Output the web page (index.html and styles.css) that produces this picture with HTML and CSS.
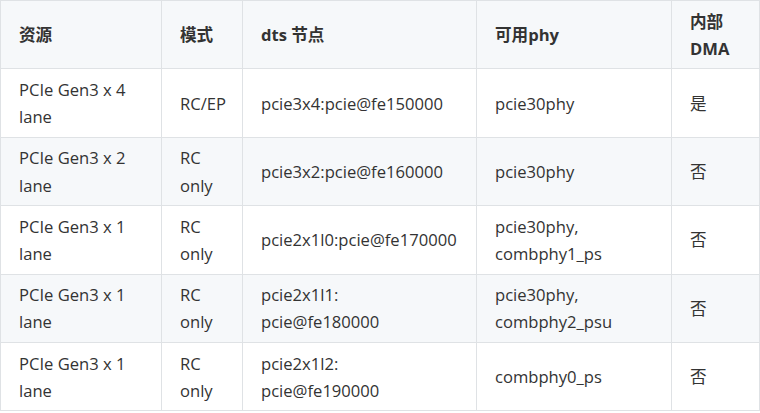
FILE: index.html
```html
<!DOCTYPE html>
<html lang="zh">
<head>
<meta charset="utf-8">
<link rel="stylesheet" href="styles.css">
</head>
<body>
<table class="tbl">
  <colgroup>
    <col class="c1"><col class="c2"><col class="c3"><col class="c4"><col class="c5">
  </colgroup>
  <thead>
    <tr><th>资源</th><th>模式</th><th>dts 节点</th><th>可用phy</th><th>内部DMA</th></tr>
  </thead>
  <tbody>
    <tr><td>PCIe Gen3 x 4 lane</td><td class="mode">RC/EP</td><td>pcie3x4:pcie@fe150000</td><td>pcie30phy</td><td>是</td></tr>
    <tr><td>PCIe Gen3 x 2 lane</td><td class="mode">RC only</td><td>pcie3x2:pcie@fe160000</td><td>pcie30phy</td><td>否</td></tr>
    <tr><td>PCIe Gen3 x 1 lane</td><td class="mode">RC only</td><td>pcie2x1l0:pcie@fe170000</td><td>pcie30phy, combphy1_ps</td><td>否</td></tr>
    <tr><td>PCIe Gen3 x 1 lane</td><td class="mode">RC only</td><td>pcie2x1l1: pcie@fe180000</td><td>pcie30phy, combphy2_psu</td><td>否</td></tr>
    <tr><td>PCIe Gen3 x 1 lane</td><td class="mode">RC only</td><td>pcie2x1l2: pcie@fe190000</td><td>combphy0_ps</td><td>否</td></tr>
  </tbody>
</table>
</body>
</html>
```
FILE: styles.css
```css
html, body {
  margin: 0;
  padding: 0;
  background: #ffffff;
}
body {
  font-family: "Open Sans", "Noto Sans CJK SC", sans-serif;
  font-size: 16.6px;
  line-height: 27.2px;
  color: #333333;
}
.tbl {
  border-collapse: collapse;
  table-layout: fixed;
  width: 759px;
}
.c1 { width: 161px; }
.c2 { width: 81px; }
.c3 { width: 234px; }
.c4 { width: 195px; }
.c5 { width: 88px; }
.tbl th,
.tbl td {
  border: 1px solid #dfe2e5;
  padding: 6.5px 18px;
  text-align: left;
  vertical-align: middle;
  height: 54.4px;
}
.tbl .mode {
  padding-right: 10px;
}
.tbl th {
  font-weight: 700;
}
.tbl thead tr,
.tbl tbody tr:nth-child(2n) {
  background: #f6f8fa;
}
```
